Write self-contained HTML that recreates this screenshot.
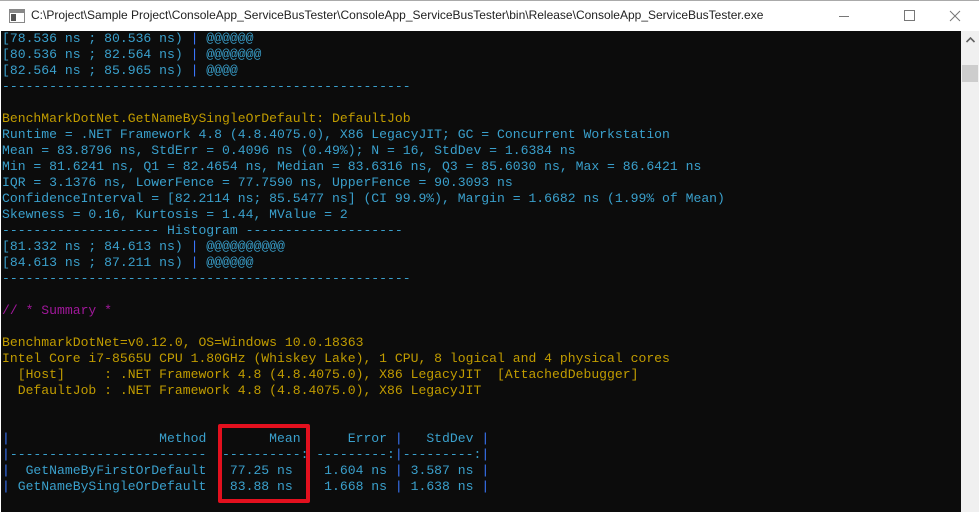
<!DOCTYPE html>
<html><head><meta charset="utf-8"><style>
html,body{margin:0;padding:0;width:979px;height:512px;overflow:hidden;background:#fff}
.title{position:absolute;left:0;top:0;width:979px;height:31px;background:#fff;border-top:1px solid #aaa;box-sizing:border-box}
.ttext{position:absolute;left:31px;top:7px;font:12px "Liberation Sans",sans-serif;color:#222;white-space:nowrap}
.con{position:absolute;left:1px;top:31px;width:960px;height:481px;background:#0c0c0c;overflow:hidden}
pre{margin:0;position:absolute;left:1px;top:0px;font-family:"Liberation Mono",monospace;font-size:13.1px;line-height:16px;color:#3aa0cc}
.y{color:#c19c00}.m{color:#a0189a}.b{color:#3b78ff}
.sb{position:absolute;left:961px;top:31px;width:18px;height:481px;background:#f0f0f0}
.box{position:absolute;left:218px;top:424px;width:84px;height:71px;border:4px solid #e3101e;border-radius:2px}
</style></head><body>
<div class="title">
<svg style="position:absolute;left:9px;top:8px" width="16" height="14"><rect x="0.5" y="0.5" width="15" height="13" fill="#fff" stroke="#888"/><rect x="1" y="1" width="14" height="3" fill="#888"/><rect x="2" y="5" width="5" height="7" fill="#555"/></svg>
<div class="ttext">C:\Project\Sample Project\ConsoleApp_ServiceBusTester\ConsoleApp_ServiceBusTester\bin\Release\ConsoleApp_ServiceBusTester.exe</div>
<div style="position:absolute;left:839px;top:15px;width:10px;height:1px;background:#777"></div>
<div style="position:absolute;left:904px;top:9px;width:9px;height:9px;border:1px solid #777"></div>
<svg style="position:absolute;left:949px;top:9px" width="12" height="12"><path d="M1 1L11 11M11 1L1 11" stroke="#777" stroke-width="1"/></svg>
</div>
<div class="con"><pre>[78.536 ns ; 80.536 ns) <span class="b">|</span> @@@@@@
[80.536 ns ; 82.564 ns) <span class="b">|</span> @@@@@@@
[82.564 ns ; 85.965 ns) <span class="b">|</span> @@@@
----------------------------------------------------

<span class="y">BenchMarkDotNet.GetNameBySingleOrDefault: DefaultJob</span>
Runtime = .NET Framework 4.8 (4.8.4075.0), X86 LegacyJIT; GC = Concurrent Workstation
Mean = 83.8796 ns, StdErr = 0.4096 ns (0.49%); N = 16, StdDev = 1.6384 ns
Min = 81.6241 ns, Q1 = 82.4654 ns, Median = 83.6316 ns, Q3 = 85.6030 ns, Max = 86.6421 ns
IQR = 3.1376 ns, LowerFence = 77.7590 ns, UpperFence = 90.3093 ns
ConfidenceInterval = [82.2114 ns; 85.5477 ns] (CI 99.9%), Margin = 1.6682 ns (1.99% of Mean)
Skewness = 0.16, Kurtosis = 1.44, MValue = 2
-------------------- Histogram --------------------
[81.332 ns ; 84.613 ns) <span class="b">|</span> @@@@@@@@@@
[84.613 ns ; 87.211 ns) <span class="b">|</span> @@@@@@
----------------------------------------------------

<span class="m">// * Summary *</span>

<span class="y">BenchmarkDotNet=v0.12.0, OS=Windows 10.0.18363
Intel Core i7-8565U CPU 1.80GHz (Whiskey Lake), 1 CPU, 8 logical and 4 physical cores
  [Host]     : .NET Framework 4.8 (4.8.4075.0), X86 LegacyJIT  [AttachedDebugger]
  DefaultJob : .NET Framework 4.8 (4.8.4075.0), X86 LegacyJIT</span>


<span class="b">|</span>                   Method        Mean      Error <span class="b">|</span>   StdDev <span class="b">|</span>
<span class="b">|</span>-------------------------  ----------: ---------:<span class="b">|</span>---------:<span class="b">|</span>
<span class="b">|</span>  GetNameByFirstOrDefault   77.25 ns    1.604 ns <span class="b">|</span> 3.587 ns <span class="b">|</span>
<span class="b">|</span> GetNameBySingleOrDefault   83.88 ns    1.668 ns <span class="b">|</span> 1.638 ns <span class="b">|</span></pre></div>
<div class="box"></div>
<div class="sb">
<svg style="position:absolute;left:5px;top:6px" width="9" height="6"><path d="M0.5 5L4.5 1L8.5 5" stroke="#606060" stroke-width="1.6" fill="none"/></svg>
<div style="position:absolute;left:1px;top:34px;width:16px;height:17px;background:#cdcdcd"></div>
</div>
</body></html>
